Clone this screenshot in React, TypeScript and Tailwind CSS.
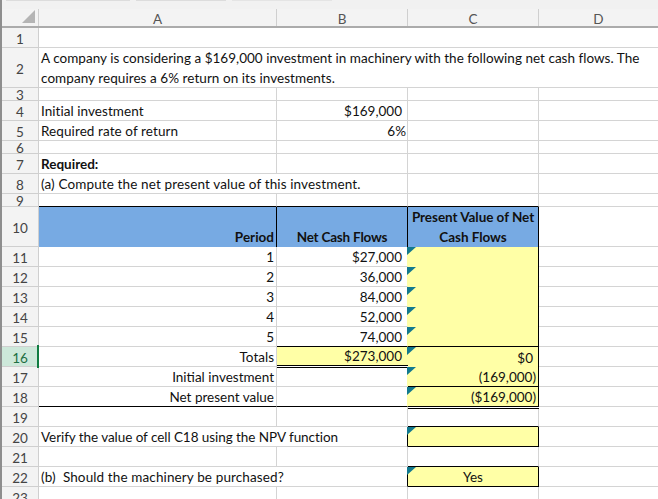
import type { ReactNode } from "react";

const line = "border-[#d4d4d4]";

function Comment() {
  return (
    <svg className="absolute -left-px top-0 z-10" width="9" height="8" viewBox="0 0 9 8">
      <polygon points="0,0 9,0 0,8" fill="#12798f" />
    </svg>
  );
}

// double accounting rule, sits one pixel into the next row
function DoubleRule({ className }: { className: string }) {
  return <div className={`absolute -bottom-[2px] z-10 h-[3px] border-y border-black ${className}`} />;
}

function Cell({ className = "", children }: { className?: string; children?: ReactNode }) {
  return (
    <div className={`relative flex min-w-0 items-center whitespace-nowrap border-b border-r pt-[2px] ${line} ${className}`}>
      {children}
    </div>
  );
}

function Row({ n, h, active, children }: { n: number; h: string; active?: boolean; children: ReactNode }) {
  return (
    <div className={`relative grid grid-cols-[37px_238px_131px_131px_119px] grid-rows-1 ${h}`}>
      <div
        className={`relative flex items-center justify-center border-b border-r border-[#cfcfcf] pt-[2px] leading-[12px] ${
          active ? "bg-[#cde8da] text-[#1d6f42]" : "bg-[#f3f3f3] text-[#444]"
        }`}
      >
        {n}
      </div>
      {active && <div className="absolute -bottom-px left-[35px] top-[-2px] z-10 w-[2px] bg-[#107c41]" />}
      {children}
    </div>
  );
}

const yellow = "bg-[#ffffa6]";

export default function App() {
  const flows = ["$27,000", "36,000", "84,000", "52,000", "74,000"];

  return (
    <div className="relative h-[499px] w-[658px] overflow-hidden bg-white pl-[2px] font-[Lato,sans-serif] text-[13.5px] text-[#111]">
      <div className="absolute bottom-0 left-0 top-0 w-[2px] bg-[#8e8e8e]" />

      {/* strip above the sheet */}
      <div className="flex h-[9px] gap-[6px] bg-[#f1f1f1] pl-[4px]">
        <div className="h-px w-[124px] bg-[#dcdcdc]" />
        <div className="h-px w-[90px] bg-[#dcdcdc]" />
        <div className="h-px w-[100px] bg-[#e4e4e4]" />
      </div>

      {/* column headers */}
      <div className="grid h-[19px] grid-cols-[37px_238px_131px_131px_119px] grid-rows-1 border-b-2 border-[#ababab] bg-[#f3f3f3] text-[#555]">
        <div className="relative border-r border-[#cfcfcf]">
          <svg className="absolute left-[20px] top-[1px]" width="13" height="13" viewBox="0 0 13 13">
            <polygon points="0,13 13,0 13,13" fill="#b4b4b4" />
          </svg>
        </div>
        <div className="flex items-center justify-center border-r border-[#cfcfcf] pt-[3px]">A</div>
        <div className="flex items-center justify-center border-r border-[#cfcfcf] pt-[3px]">B</div>
        <div className="flex items-center justify-center border-r border-[#cfcfcf] pt-[3px]">C</div>
        <div className="flex items-center justify-center pt-[3px]">D</div>
      </div>

      <Row n={1} h="h-[20px]">
        <div className={`col-span-4 border-b ${line}`} />
      </Row>
      <Row n={2} h="h-[40px]">
        <div className={`col-span-4 border-b ${line} pl-[2px] leading-[20px]`}>
          <div className="tracking-[0.02px]">
            A company is considering a $169,000 investment in machinery with the following net cash flows. The
          </div>
          <div className="tracking-[0.06px]">company requires a 6% return on its investments.</div>
        </div>
      </Row>
      <Row n={3} h="h-[13px]">
        <Cell />
        <Cell />
        <Cell />
        <Cell className="border-r-0" />
      </Row>
      <Row n={4} h="h-[20px]">
        <Cell className="pl-[2px] tracking-[0.05px]">Initial investment</Cell>
        <Cell className="justify-end pr-[5px]">$169,000</Cell>
        <Cell />
        <Cell className="border-r-0" />
      </Row>
      <Row n={5} h="h-[20px]">
        <Cell className="pl-[2px] tracking-[0.09px]">Required rate of return</Cell>
        <Cell className="justify-end pr-[1px]">6%</Cell>
        <Cell />
        <Cell className="border-r-0" />
      </Row>
      <Row n={6} h="h-[13px]">
        <Cell />
        <Cell />
        <Cell />
        <Cell className="border-r-0" />
      </Row>
      <Row n={7} h="h-[20px]">
        <Cell className="pl-[2px] font-bold">Required:</Cell>
        <Cell />
        <Cell />
        <Cell className="border-r-0" />
      </Row>
      <Row n={8} h="h-[20px]">
        <Cell className="border-r-0 pl-[2px] tracking-[0.13px]">
          (a) Compute the net present value of this investment.
        </Cell>
        <Cell />
        <Cell />
        <Cell className="border-r-0" />
      </Row>
      <Row n={9} h="h-[13px]">
        <Cell className="border-b-black" />
        <Cell className="border-b-black" />
        <Cell className="border-b-black" />
        <Cell className="border-r-0" />
      </Row>

      <Row n={10} h="h-[40px]">
        <div className="flex items-end justify-end border-r border-black bg-[#77aae3] pr-[2px] font-bold leading-[20px]">
          Period
        </div>
        <div className="flex items-end justify-center border-r border-black bg-[#77aae3] font-bold leading-[20px] tracking-[-0.2px]">
          Net Cash Flows
        </div>
        <div className="flex items-center justify-center border-r border-black bg-[#77aae3] text-center font-bold leading-[20px] tracking-[-0.05px]">
          Present Value of Net
          <br />
          Cash Flows
        </div>
        <Cell className="border-r-0" />
      </Row>

      {flows.map((v, i) => (
        <Row key={v} n={11 + i} h="h-[20px]">
          <Cell className="justify-end pr-[2px]">{i + 1}</Cell>
          <Cell className={`justify-end border-r-[#ffffa6] pr-[5px] ${i === 4 ? "border-b-black" : ""}`}>{v}</Cell>
          <div className={`relative border-r border-black ${yellow} ${i === 4 ? "border-b border-b-black" : ""}`}>
            <Comment />
          </div>
          <Cell className="border-r-0" />
        </Row>
      ))}

      <Row n={16} h="h-[20px]" active>
        <Cell className="justify-end pr-[2px]">Totals</Cell>
        <Cell className={`justify-end border-r-[#ffffa6] pb-[2px] pr-[5px] ${yellow}`}>
          $273,000
          <DoubleRule className="-right-px left-0 bg-white" />
        </Cell>
        <div className={`relative flex items-center justify-end border-r border-black pr-[5px] pt-[2px] ${yellow}`}>
          <Comment />
          $0
        </div>
        <Cell className="border-r-0" />
      </Row>
      <Row n={17} h="h-[20px]">
        <Cell className="justify-end pr-[2px]">Initial investment</Cell>
        <Cell className="border-r-[#ffffa6]" />
        <div className={`relative flex items-center justify-end border-b border-r border-black pr-[2px] pt-[2px] ${yellow}`}>
          <Comment />
          (169,000)
        </div>
        <Cell className="border-r-0" />
      </Row>
      <Row n={18} h="h-[20px]">
        <Cell className="justify-end border-b-black pr-[2px]">Net present value</Cell>
        <Cell className="border-b-black border-r-[#ffffa6]" />
        <div className={`relative flex items-center justify-end border-r border-black pr-[2px] ${yellow}`}>
          <Comment />
          ($169,000)
          <DoubleRule className="-right-px left-0 bg-white" />
        </div>
        <Cell className="border-r-0" />
      </Row>
      <Row n={19} h="h-[20px]">
        <Cell />
        <Cell />
        <Cell className="border-b-black" />
        <Cell className="border-r-0" />
      </Row>
      <Row n={20} h="h-[20px]">
        <Cell className="border-r-0 pl-[2px] tracking-[-0.06px]">Verify the value of cell C18 using the NPV function</Cell>
        <Cell className="border-r-black" />
        <div className={`relative border-b border-r border-black ${yellow}`}>
          <Comment />
        </div>
        <Cell className="border-r-0" />
      </Row>
      <Row n={21} h="h-[20px]">
        <Cell />
        <Cell />
        <Cell className="border-b-black" />
        <Cell className="border-r-0" />
      </Row>
      <Row n={22} h="h-[20px]">
        <Cell className="border-r-0 pl-[2px] tracking-[0.12px]">(b)&nbsp; Should the machinery be purchased?</Cell>
        <Cell className="border-r-black" />
        <div className={`relative flex items-center justify-center border-b border-r border-black pt-[2px] ${yellow}`}>
          <Comment />
          Yes
        </div>
        <Cell className="border-r-0" />
      </Row>
      <Row n={23} h="h-[20px]">
        <Cell />
        <Cell />
        <Cell />
        <Cell className="border-r-0" />
      </Row>
    </div>
  );
}
